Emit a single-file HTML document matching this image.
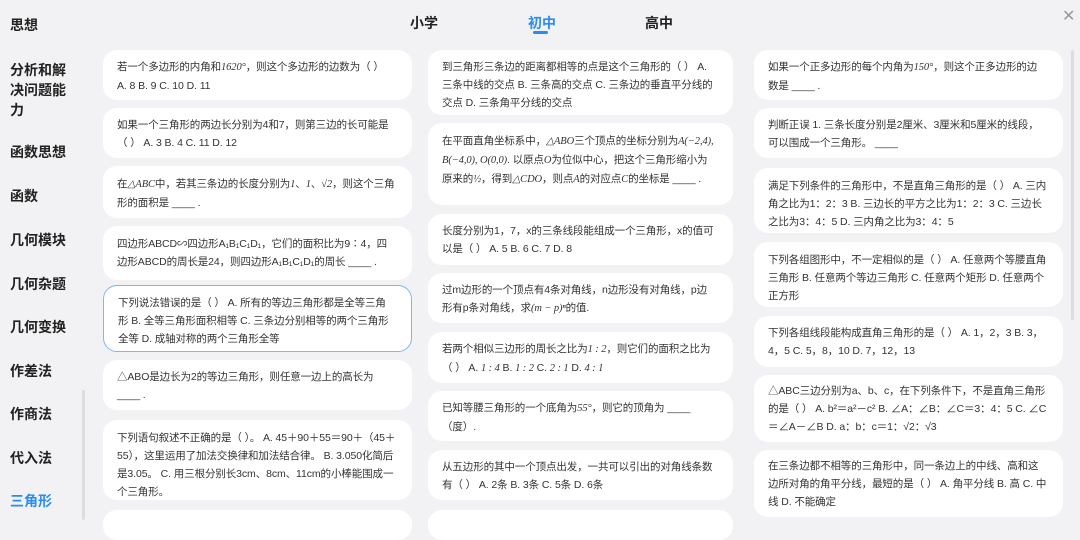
<!DOCTYPE html>
<html><head><meta charset="utf-8"><style>
*{margin:0;padding:0;box-sizing:border-box}
body{width:1080px;height:524px;overflow:hidden;background:#f2f2f4;font-family:"Liberation Sans","Noto Sans CJK SC",sans-serif;color:#333;position:relative}
.s{position:absolute;left:10px;font-size:14px;font-weight:bold;color:#222;line-height:20px}
.c{position:absolute;background:#fff;border-radius:14px;padding:8px 16px 0 14px;font-size:10.5px;letter-spacing:-0.1px;line-height:18px;color:#333}
.t{position:absolute;top:13px;font-size:14px;font-weight:bold;color:#222}
i{font-family:"Liberation Serif",serif}
</style></head><body>
<div class="s" style="top:15px">思想</div>
<div class="s" style="top:60px">分析和解<br>决问题能<br>力</div>
<div class="s" style="top:142px">函数思想</div>
<div class="s" style="top:186px">函数</div>
<div class="s" style="top:230px">几何模块</div>
<div class="s" style="top:274px">几何杂题</div>
<div class="s" style="top:317px">几何变换</div>
<div class="s" style="top:361px">作差法</div>
<div class="s" style="top:404px">作商法</div>
<div class="s" style="top:448px">代入法</div>
<div class="s" style="top:491px;color:#2a8cf5">三角形</div>
<div style="position:absolute;left:82px;top:390px;width:3px;height:130px;background:#ddd;border-radius:2px"></div>
<div style="position:absolute;left:1071px;top:50px;width:3px;height:270px;background:#ddd;border-radius:2px"></div>

<div class="t" style="left:410px">小学</div>
<div class="t" style="left:528px;color:#2a8cf5">初中</div>
<div style="position:absolute;left:533px;top:31px;width:15px;height:3px;border-radius:2px;background:#2a8cf5"></div>
<div class="t" style="left:645px">高中</div>
<div style="position:absolute;left:1062px;top:6px;font-size:16px;color:#999">✕</div>

<div class="c" style="left:103px;top:50px;width:309px;height:50px">若一个多边形的内角和<i>1620°</i>，则这个多边形的边数为（ ） A. 8 B. 9 C. 10 D. 11</div>
<div class="c" style="left:103px;top:108px;width:309px;height:50px">如果一个三角形的两边长分别为4和7，则第三边的长可能是（ ） A. 3 B. 4 C. 11 D. 12</div>
<div class="c" style="left:103px;top:166px;width:309px;height:52px;padding-top:9px">在<i>△ABC</i>中，若其三条边的长度分别为<i>1</i>、<i>1</i>、<i>√2</i>，则这个三角形的面积是 ____ .</div>
<div class="c" style="left:103px;top:226px;width:309px;height:54px;padding-top:9px">四边形ABCD∽四边形A₁B₁C₁D₁，它们的面积比为9∶4，四边形ABCD的周长是24，则四边形A₁B₁C₁D₁的周长 ____ .</div>
<div class="c" style="left:103px;top:285px;width:309px;height:67px;border:1px solid #7fb5f0;padding-top:8px">下列说法错误的是（ ） A. 所有的等边三角形都是全等三角形 B. 全等三角形面积相等 C. 三条边分别相等的两个三角形全等 D. 成轴对称的两个三角形全等</div>
<div class="c" style="left:103px;top:360px;width:309px;height:50px">△ABO是边长为2的等边三角形，则任意一边上的高长为 ____ .</div>
<div class="c" style="left:103px;top:420px;width:309px;height:80px;padding-top:9px">下列语句叙述不正确的是（ ）。 A. 45＋90＋55＝90＋（45＋55），这里运用了加法交换律和加法结合律。 B. 3.050化简后是3.05。 C. 用三根分别长3cm、8cm、11cm的小棒能围成一个三角形。</div>
<div class="c" style="left:103px;top:510px;width:309px;height:30px"></div>

<div class="c" style="left:428px;top:50px;width:305px;height:65px">到三角形三条边的距离都相等的点是这个三角形的（ ） A. 三条中线的交点 B. 三条高的交点 C. 三条边的垂直平分线的交点 D. 三条角平分线的交点</div>
<div class="c" style="left:428px;top:123px;width:305px;height:82px;padding-top:9px">在平面直角坐标系中，<i>△ABO</i>三个顶点的坐标分别为<i>A(−2,4), B(−4,0), O(0,0)</i>. 以原点<i>O</i>为位似中心，把这个三角形缩小为原来的<i>½</i>，得到<i>△CDO</i>，则点<i>A</i>的对应点<i>C</i>的坐标是 ____ .</div>
<div class="c" style="left:428px;top:214px;width:305px;height:51px">长度分别为1，7，x的三条线段能组成一个三角形，x的值可以是（ ） A. 5 B. 6 C. 7 D. 8</div>
<div class="c" style="left:428px;top:273px;width:305px;height:50px">过m边形的一个顶点有4条对角线，n边形没有对角线，p边形有p条对角线，求<i>(m − p)ⁿ</i>的值.</div>
<div class="c" style="left:428px;top:332px;width:305px;height:51px">若两个相似三边形的周长之比为<i>1 : 2</i>，则它们的面积之比为（ ） A. <i>1 : 4</i> B. <i>1 : 2</i> C. <i>2 : 1</i> D. <i>4 : 1</i></div>
<div class="c" style="left:428px;top:391px;width:305px;height:50px">已知等腰三角形的一个底角为<i>55°</i>，则它的顶角为 ____ （度）.</div>
<div class="c" style="left:428px;top:450px;width:305px;height:50px">从五边形的其中一个顶点出发，一共可以引出的对角线条数有（ ） A. 2条 B. 3条 C. 5条 D. 6条</div>
<div class="c" style="left:428px;top:510px;width:305px;height:30px"></div>

<div class="c" style="left:754px;top:50px;width:309px;height:50px">如果一个正多边形的每个内角为<i>150°</i>，则这个正多边形的边数是 ____ .</div>
<div class="c" style="left:754px;top:108px;width:309px;height:50px">判断正误 1. 三条长度分别是2厘米、3厘米和5厘米的线段，可以围成一个三角形。 ____</div>
<div class="c" style="left:754px;top:168px;width:309px;height:65px;padding-top:9px">满足下列条件的三角形中，不是直角三角形的是（ ） A. 三内角之比为1：2：3 B. 三边长的平方之比为1：2：3 C. 三边长之比为3：4：5 D. 三内角之比为3：4：5</div>
<div class="c" style="left:754px;top:242px;width:309px;height:65px;padding-top:9px">下列各组图形中，不一定相似的是（ ） A. 任意两个等腰直角三角形 B. 任意两个等边三角形 C. 任意两个矩形 D. 任意两个正方形</div>
<div class="c" style="left:754px;top:316px;width:309px;height:51px">下列各组线段能构成直角三角形的是（ ） A. 1，2，3 B. 3，4，5 C. 5，8，10 D. 7，12，13</div>
<div class="c" style="left:754px;top:375px;width:309px;height:67px;padding-top:7px">△ABC三边分别为a、b、c，在下列条件下，不是直角三角形的是（ ） A. b²＝a²－c² B. ∠A：∠B：∠C＝3：4：5 C. ∠C＝∠A－∠B D. a：b：c＝1：√2：√3</div>
<div class="c" style="left:754px;top:450px;width:309px;height:67px;padding-top:7px">在三条边都不相等的三角形中，同一条边上的中线、高和这边所对角的角平分线，最短的是（ ） A. 角平分线 B. 高 C. 中线 D. 不能确定</div>
</body></html>
